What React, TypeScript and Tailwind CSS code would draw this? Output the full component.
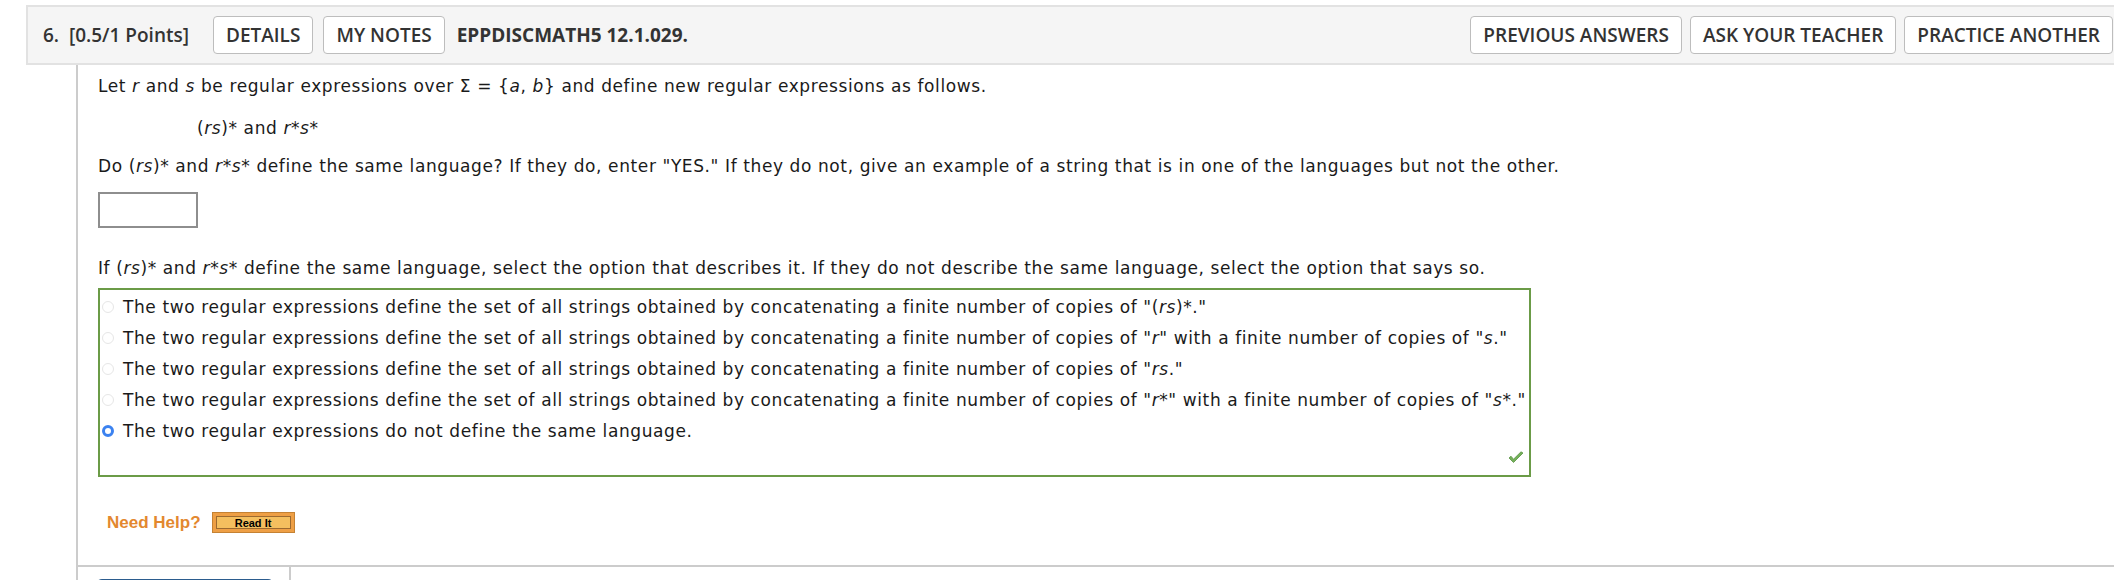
import React from "react";

// Header buttons, left and right groups
const LEFT_BUTTONS = ["DETAILS", "MY NOTES"];
const RIGHT_BUTTONS = ["PREVIOUS ANSWERS", "ASK YOUR TEACHER", "PRACTICE ANOTHER"];

const PREFIX = "The two regular expressions define the set of all strings obtained by concatenating a finite number of copies of ";

const OPTIONS: React.ReactNode[] = [
  <>
    {PREFIX}"(<i>rs</i>)*."
  </>,
  <>
    {PREFIX}"<i>r</i>" with a finite number of copies of "<i>s</i>."
  </>,
  <>
    {PREFIX}"<i>rs</i>."
  </>,
  <>
    {PREFIX}"<i>r</i>*" with a finite number of copies of "<i>s</i>*."
  </>,
  <>The two regular expressions do not define the same language.</>,
];

function HeaderButton({ label }: { label: string }) {
  return (
    <button className="h-[38px] rounded-[4px] border border-[#bdbdbd] bg-white px-[12px] text-[19px] font-semibold text-[#333]">
      {label}
    </button>
  );
}

function Radio({ checked }: { checked: boolean }) {
  if (checked) {
    return <span className="h-[12px] w-[12px] shrink-0 rounded-full border-[3.5px] border-[#3b82f0] bg-white" />;
  }
  return <span className="h-[12px] w-[12px] shrink-0 rounded-full border border-[#e6e6e6] bg-white" />;
}

export default function App() {
  return (
    <div className="h-[580px] w-full overflow-hidden bg-white">
      <div
        className="ml-[26px] mt-[5px] flex h-[60px] items-center border-2 border-r-0 border-[#e2e2e2] bg-[#f5f5f5] pl-[15px] pr-[1px] text-[#333]"
        style={{ fontFamily: '"Open Sans", sans-serif' }}
      >
        <span className="whitespace-pre text-[19px] font-semibold">6.  [0.5/1 Points]</span>
        <div className="ml-[24px] flex gap-[10px]">
          {LEFT_BUTTONS.map((b) => (
            <HeaderButton key={b} label={b} />
          ))}
        </div>
        <span className="ml-[12px] text-[19px] font-bold">EPPDISCMATH5 12.1.029.</span>
        <div className="ml-auto flex gap-[8px]">
          {RIGHT_BUTTONS.map((b) => (
            <HeaderButton key={b} label={b} />
          ))}
        </div>
      </div>

      <div className="ml-[76px] border-l-2 border-[#cccccc]">
        <div
          className="border-b-2 border-[#cccccc] pb-[32px] pl-[20px] pt-[9px] text-[17px] leading-[24px] tracking-[0.6px] text-[#1a1a1a]"
          style={{ fontFamily: '"DejaVu Sans", Verdana, sans-serif' }}
        >
          <p>
            Let <i>r</i> and <i>s</i> be regular expressions over Σ = {"{"}
            <i>a</i>, <i>b</i>
            {"}"} and define new regular expressions as follows.
          </p>
          <p className="ml-[99px] mt-[18px]">
            (<i>rs</i>)* and <i>r</i>*<i>s</i>*
          </p>
          <p className="mt-[14px]">
            Do (<i>rs</i>)* and <i>r</i>*<i>s</i>* define the same language? If they do, enter "YES." If they do not,
            give an example of a string that is in one of the languages but not the other.
          </p>
          <div className="mt-[14px] h-[36px] w-[100px] border-2 border-[#8e8e8e] bg-white" />
          <p className="mt-[28px]">
            If (<i>rs</i>)* and <i>r</i>*<i>s</i>* define the same language, select the option that describes it. If
            they do not describe the same language, select the option that says so.
          </p>

          <div className="mt-[8px] w-[1433px] border-2 border-[#6b9b47] pt-[1px]">
            {OPTIONS.map((opt, i) => (
              <div key={i} className="flex h-[31px] items-center pl-[2px]">
                <Radio checked={i === 4} />
                <span className="ml-[9px]">{opt}</span>
              </div>
            ))}
            <div className="flex h-[29px] items-start justify-end pr-[5px] pt-[5px]">
              <svg width="16" height="13" viewBox="0 0 16 13">
                <path d="M1 7 L5.5 11.5 L15 2 L13 0.8 L5.5 8.2 L3 5.2 Z" fill="#74b05a" stroke="#5a9444" strokeWidth="0.8" />
              </svg>
            </div>
          </div>

          <div className="ml-[9px] mt-[35px] flex h-[21px] items-center" style={{ fontFamily: '"Liberation Sans", Arial, sans-serif' }}>
            <span className="text-[17px] font-bold leading-none tracking-normal text-[#e3882f]">Need Help?</span>
            <span className="ml-[11px] flex h-[21px] w-[83px] items-center justify-center border border-[#c58233] bg-[#ee9f45] p-[3px]">
              <span className="flex h-full w-full items-center justify-center border border-[#9c6a30] bg-[#f4bf5f] text-[11px] font-bold tracking-normal text-black">
                Read It
              </span>
            </span>
          </div>
        </div>

        <div className="flex h-[20px]">
          <div className="w-[213px] border-r-2 border-[#cccccc] pl-[18px] pt-[12px]">
            <div className="h-[8px] w-[178px] rounded-t-[6px] bg-[#2b5c8e]" />
          </div>
        </div>
      </div>
    </div>
  );
}
